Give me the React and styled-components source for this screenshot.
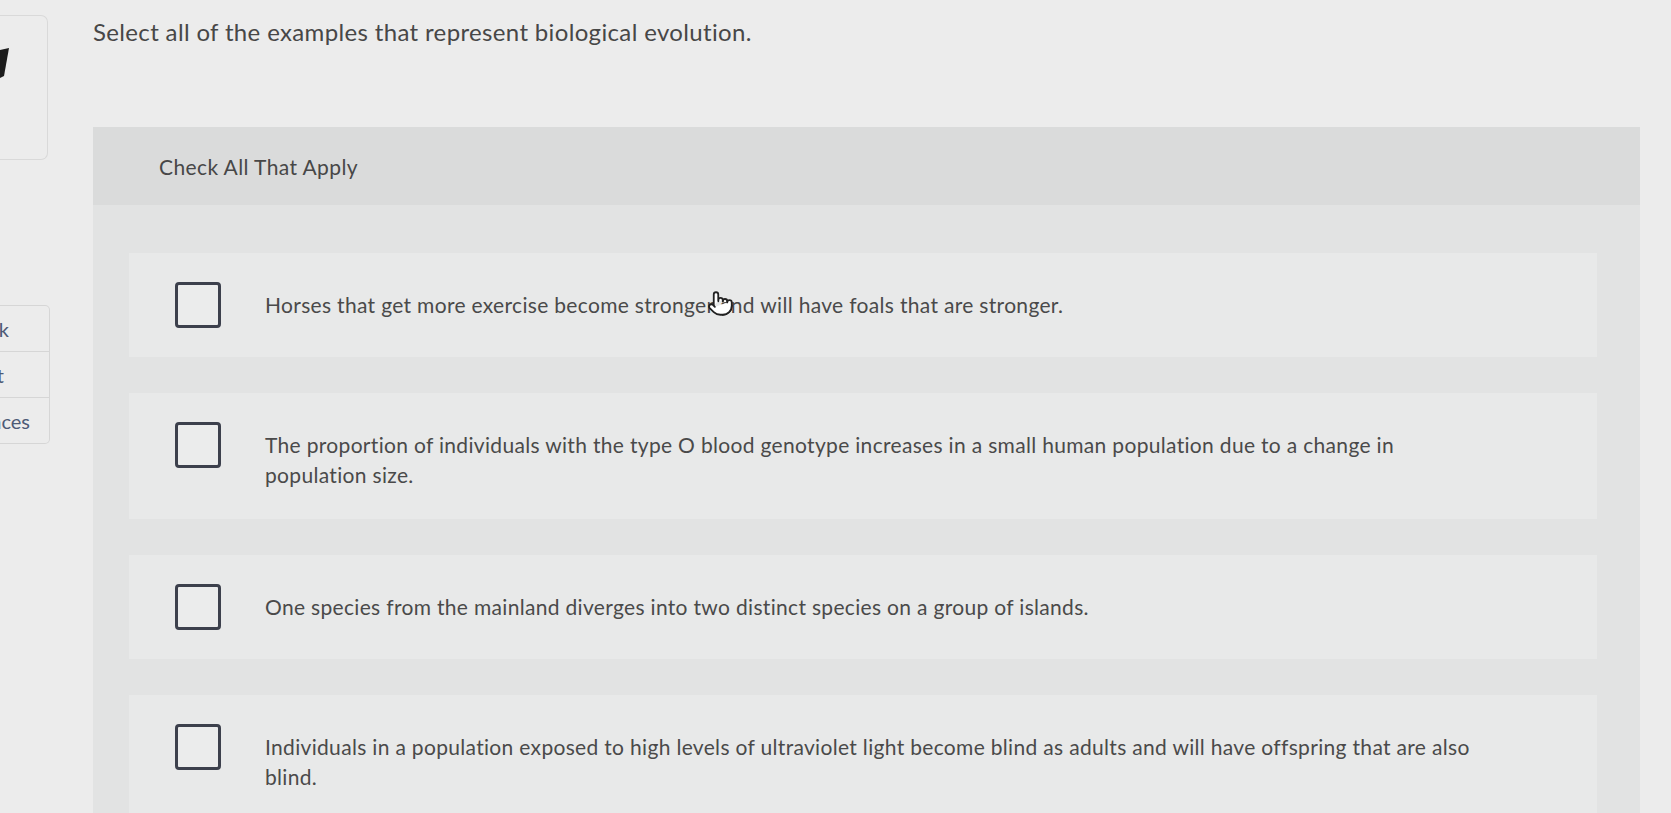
import React from 'react'
import { styled, createGlobalStyle } from 'styled-components'
import { Pointer } from 'lucide-react'

const GlobalStyle = createGlobalStyle`
  html, body {
    margin: 0;
    padding: 0;
    background: #ececec;
    font-family: Lato, "Open Sans", sans-serif;
    color: #4a4a4a;
    overflow: hidden;
  }
`

const Page = styled.div`
  display: flex;
  width: 1671px;
  height: 813px;
  background: #ececec;
`

const Sidebar = styled.div`
  width: 50px;
  flex-shrink: 0;
  display: flex;
  flex-direction: column;
`

const TopBox = styled.div`
  margin-top: 15px;
  width: 48px;
  height: 145px;
  border: 1px solid #d9d9d9;
  border-left: none;
  border-radius: 0 7px 7px 0;
  box-sizing: border-box;
  padding-top: 32px;
`

const NavBox = styled.div`
  margin-top: 145px;
  width: 50px;
  border: 1px solid #d6d6d6;
  border-left: none;
  border-radius: 0 5px 5px 0;
  box-sizing: border-box;
  display: flex;
  flex-direction: column;
`

const NavItem = styled.div`
  height: 45px;
  display: flex;
  align-items: center;
  justify-content: flex-end;
  overflow: hidden;
  white-space: nowrap;
  padding-right: ${p => p.$pr}px;
  font-size: 20px;
  color: #4d5a76;
  border-top: ${p => (p.$first ? 'none' : '1px solid #d6d6d6')};
`

const Main = styled.div`
  flex: 1;
  padding: 0 31px 0 43px;
  display: flex;
  flex-direction: column;
`

const Title = styled.h1`
  margin: 18px 0 0 0;
  font-size: 24px;
  line-height: 28px;
  letter-spacing: 0.35px;
  font-weight: 400;
  color: #474747;
`

const Panel = styled.div`
  margin-top: 81px;
  background: #e2e3e3;
  flex: 1;
  display: flex;
  flex-direction: column;
`

const PanelHeader = styled.div`
  height: 78px;
  background: #dadbdb;
  display: flex;
  align-items: center;
  padding-left: 66px;
  font-size: 21px;
  letter-spacing: 0.4px;
  color: #474747;
`

const Options = styled.div`
  padding: 48px 43px 0 36px;
  display: flex;
  flex-direction: column;
  gap: 36px;
`

const Card = styled.label`
  display: flex;
  align-items: flex-start;
  background: #e8e9e9;
  padding: 29px 0 29px 46px;
  cursor: pointer;
`

const Box = styled.span`
  width: 46px;
  height: 46px;
  flex-shrink: 0;
  box-sizing: border-box;
  border: 3px solid #3c404c;
  border-radius: 4px;
  background: #ebecec;
`

const OptionText = styled.div`
  margin: 8px 0 0 44px;
  max-width: 1205px;
  font-size: 21px;
  line-height: 30px;
  letter-spacing: 0.32px;
  color: #4a4a4a;
`

const CursorSpot = styled.span`
  position: relative;
`

const CursorIcon = styled.span`
  position: absolute;
  left: 1px;
  top: -2px;
  display: flex;
`

const options = [
  {
    id: 1,
    text: (
      <>
        Horses that get more exercise become stronge
        <CursorSpot>
          r
          <CursorIcon>
            <Pointer size={27} fill="#ffffff" color="#222" strokeWidth={1.6} />
          </CursorIcon>
        </CursorSpot>{' '}
        and will have foals that are stronger.
      </>
    ),
  },
  {
    id: 2,
    text: 'The proportion of individuals with the type O blood genotype increases in a small human population due to a change in population size.',
  },
  {
    id: 3,
    text: 'One species from the mainland diverges into two distinct species on a group of islands.',
  },
  {
    id: 4,
    text: 'Individuals in a population exposed to high levels of ultraviolet light become blind as adults and will have offspring that are also blind.',
  },
]

const navItems = [
  { label: 'eBook', pr: 40 },
  { label: 'Print', pr: 45 },
  { label: 'References', pr: 19 },
]

const App = () => {
  return (
    <>
      <GlobalStyle />
      <Page>
        <Sidebar>
          <TopBox>
            <svg width="10" height="30" viewBox="0 0 10 30">
              <path d="M0 2 L9 0 L4 28 L0 30 Z" fill="#1c1c1c" />
            </svg>
          </TopBox>
          <NavBox>
            {navItems.map((item, key) => (
              <NavItem key={item.label} $pr={item.pr} $first={key === 0}>
                {item.label}
              </NavItem>
            ))}
          </NavBox>
        </Sidebar>
        <Main>
          <Title>Select all of the examples that represent biological evolution.</Title>
          <Panel>
            <PanelHeader>Check All That Apply</PanelHeader>
            <Options>
              {options.map(item => (
                <Card key={item.id}>
                  <Box />
                  <OptionText>{item.text}</OptionText>
                </Card>
              ))}
            </Options>
          </Panel>
        </Main>
      </Page>
    </>
  )
}

export default App
